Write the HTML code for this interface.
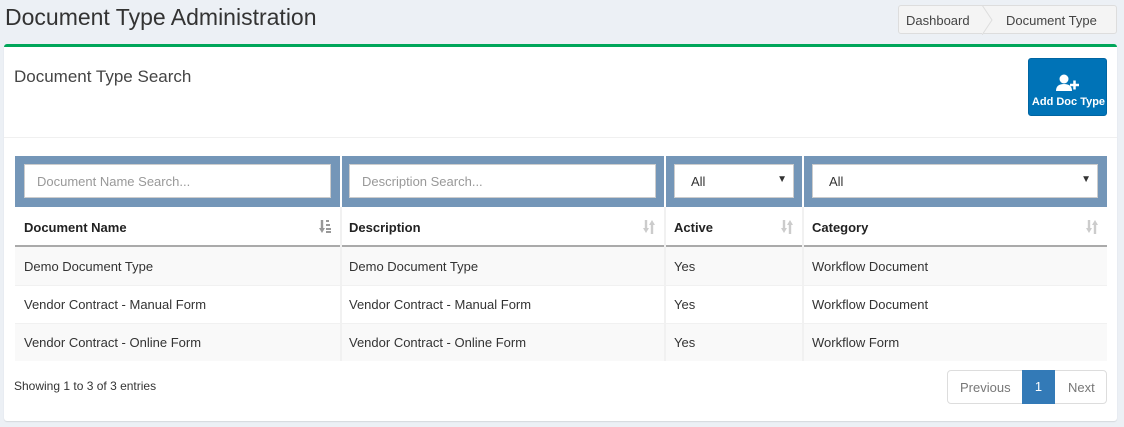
<!DOCTYPE html>
<html><head><meta charset="utf-8"><style>
*{box-sizing:border-box;margin:0;padding:0}
body{width:1124px;height:427px;background:#ecf0f5;font-family:"Liberation Sans",sans-serif;color:#333;position:relative;overflow:hidden;font-size:13px}
.a{position:absolute}
h1{position:absolute;left:5px;top:4px;font-size:23px;font-weight:normal;color:#333}
.bc{left:898px;top:5px;width:219px;height:29px;background:#f4f4f4;border:1px solid #ddd;border-radius:3px;font-size:13px;color:#444}
.card{left:4px;top:44px;width:1113px;height:377px;background:#fff;border-top:3px solid #00a65a;border-radius:3px;box-shadow:0 1px 1px rgba(0,0,0,.1)}
.btn{left:1028px;top:58px;width:79px;height:58px;background:#0073b7;border:1px solid #0065a2;border-radius:3px;color:#fff;font-size:11px;font-weight:bold;text-align:center}
.band{top:156px;height:51px;background:#7496b8}
.inp{background:#fff;border:1px solid #ccc;height:34px;font-size:13px;color:#999;padding:9px 12px}
.th{top:207px;height:40px;background:#fff;font-weight:bold;font-size:13px;padding:13px 9px;color:#222;border-bottom:2px solid #aaa}
.td{height:38px;font-size:13px;padding:12px 9px;color:#333}
.s{position:absolute;right:9px;top:13px}
</style></head><body>
<h1>Document Type Administration</h1>
<div class="a bc"><span class="a" style="left:7px;top:7px">Dashboard</span>
<svg class="a" style="left:83px;top:-1px" width="12" height="30"><path d="M0 0 L10 15 L0 30" fill="#f4f4f4" stroke="#ddd"/></svg>
<span class="a" style="left:107px;top:7px">Document Type</span></div>
<div class="a card"></div>
<div class="a" style="left:14px;top:67px;font-size:17px;color:#444">Document Type Search</div>
<div class="a" style="left:4px;top:137px;width:1113px;height:1px;background:#f0f0f0"></div>
<div class="a btn"><svg class="a" style="left:27px;top:15px" width="24" height="18" viewBox="0 0 24 18"><circle cx="8" cy="5" r="4.5" fill="#fff"/><path d="M0 17 Q0 10 8 10 Q16 10 16 17Z" fill="#fff"/><path d="M14 11h9M18.5 6.5v9" stroke="#fff" stroke-width="2.5"/></svg><span class="a" style="left:0;width:79px;top:37px">Add Doc Type</span></div>

<div class="a band" style="left:15px;width:325px"></div>
<div class="a band" style="left:342px;width:322px"></div>
<div class="a band" style="left:666px;width:136px"></div>
<div class="a band" style="left:804px;width:303px"></div>
<div class="a inp" style="left:24px;top:164px;width:307px">Document Name Search...</div>
<div class="a inp" style="left:349px;top:164px;width:307px">Description Search...</div>
<div class="a inp" style="left:674px;top:164px;width:120px;color:#333;padding-left:16px">All<span class="a" style="right:6px;top:9px;font-size:10px">▼</span></div>
<div class="a inp" style="left:812px;top:164px;width:286px;color:#333;padding-left:16px">All<span class="a" style="right:6px;top:9px;font-size:10px">▼</span></div>

<div class="a th" style="left:15px;width:325px">Document Name<svg class="s" width="12" height="14"><path d="M3 0v10" stroke="#999" stroke-width="2.4"/><path d="M0 8h6l-3 5z" fill="#999"/><path d="M7 1h3M7 5h4M7 9h5M7 12h5" stroke="#999" stroke-width="2"/></svg></div>
<div class="a th" style="left:340px;width:324px">Description<svg class="s" width="12" height="14"><path d="M3 0v10" stroke="#ccc" stroke-width="2.4"/><path d="M0 8h6l-3 5z" fill="#ccc"/><path d="M9 14v-10" stroke="#ccc" stroke-width="2.4"/><path d="M6 5h6l-3-5z" fill="#ccc"/></svg></div>
<div class="a th" style="left:665px;width:137px">Active<svg class="s" width="12" height="14"><path d="M3 0v10" stroke="#ccc" stroke-width="2.4"/><path d="M0 8h6l-3 5z" fill="#ccc"/><path d="M9 14v-10" stroke="#ccc" stroke-width="2.4"/><path d="M6 5h6l-3-5z" fill="#ccc"/></svg></div>
<div class="a th" style="left:803px;width:304px">Category<svg class="s" width="12" height="14"><path d="M3 0v10" stroke="#ccc" stroke-width="2.4"/><path d="M0 8h6l-3 5z" fill="#ccc"/><path d="M9 14v-10" stroke="#ccc" stroke-width="2.4"/><path d="M6 5h6l-3-5z" fill="#ccc"/></svg></div>

<div class="a" style="left:15px;top:247px;width:1092px;height:38px;background:#f9f9f9"></div>
<div class="a" style="left:15px;top:323px;width:1092px;height:38px;background:#f9f9f9"></div>
<div class="a" style="left:340px;top:207px;width:2px;height:154px;background:#f1f1f1"></div>
<div class="a" style="left:664px;top:207px;width:2px;height:154px;background:#f1f1f1"></div>
<div class="a" style="left:802px;top:207px;width:2px;height:154px;background:#f1f1f1"></div>
<div class="a" style="left:15px;top:285px;width:1092px;height:1px;background:#f1f1f1"></div>
<div class="a" style="left:15px;top:323px;width:1092px;height:1px;background:#f1f1f1"></div>

<div class="a td" style="left:15px;top:247px">Demo Document Type</div>
<div class="a td" style="left:340px;top:247px">Demo Document Type</div>
<div class="a td" style="left:665px;top:247px">Yes</div>
<div class="a td" style="left:803px;top:247px">Workflow Document</div>
<div class="a td" style="left:15px;top:285px">Vendor Contract - Manual Form</div>
<div class="a td" style="left:340px;top:285px">Vendor Contract - Manual Form</div>
<div class="a td" style="left:665px;top:285px">Yes</div>
<div class="a td" style="left:803px;top:285px">Workflow Document</div>
<div class="a td" style="left:15px;top:323px">Vendor Contract - Online Form</div>
<div class="a td" style="left:340px;top:323px">Vendor Contract - Online Form</div>
<div class="a td" style="left:665px;top:323px">Yes</div>
<div class="a td" style="left:803px;top:323px">Workflow Form</div>

<div class="a" style="left:14px;top:379px;font-size:12px;color:#333">Showing 1 to 3 of 3 entries</div>
<div class="a" style="left:947px;top:370px;width:160px;height:34px;border:1px solid #ddd;border-radius:4px;font-size:13px;color:#777">
<span class="a" style="left:12px;top:9px">Previous</span>
<div class="a" style="left:74px;top:-1px;width:33px;height:34px;background:#337ab7;color:#fff;text-align:center;padding-top:9px">1</div>
<span class="a" style="left:120px;top:9px">Next</span></div>
</body></html>
